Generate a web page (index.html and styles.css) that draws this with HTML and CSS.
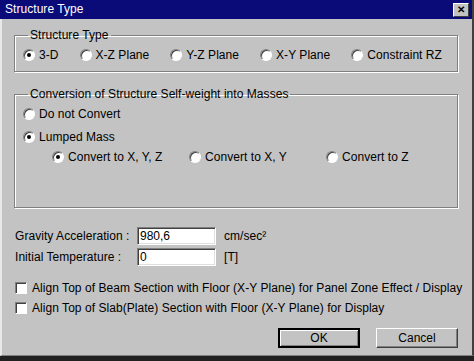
FILE: index.html
```html
<!DOCTYPE html>
<html>
<head>
  <title>Structure Type</title>
  <link rel="stylesheet" href="styles.css">
</head>
<body>
  <div class="dialog">
    <div class="titlebar">
      <span class="title">Structure Type</span>
      <span class="close">&#x2715;</span>
    </div>

    <div class="content">
      <fieldset class="group group-type">
        <legend>Structure Type</legend>
        <div class="radio-row">
          <label class="option"><span class="radio checked"></span>3-D</label>
          <label class="option"><span class="radio"></span>X-Z Plane</label>
          <label class="option"><span class="radio"></span>Y-Z Plane</label>
          <label class="option"><span class="radio"></span>X-Y Plane</label>
          <label class="option"><span class="radio"></span>Constraint RZ</label>
        </div>
      </fieldset>

      <fieldset class="group group-mass">
        <legend>Conversion of Structure Self-weight into Masses</legend>
        <label class="option line"><span class="radio"></span>Do not Convert</label>
        <label class="option line lumped"><span class="radio checked"></span>Lumped Mass</label>
        <div class="sub-row">
          <label class="option"><span class="radio checked"></span>Convert to X, Y, Z</label>
          <label class="option"><span class="radio"></span>Convert to X, Y</label>
          <label class="option"><span class="radio"></span>Convert to Z</label>
        </div>
      </fieldset>

      <div class="fields">
        <span class="field-label">Gravity Acceleration :</span>
        <input class="field" type="text" value="980,6">
        <span class="unit">cm/sec&sup2;</span>
        <span class="field-label">Initial Temperature :</span>
        <input class="field" type="text" value="0">
        <span class="unit">[T]</span>
      </div>

      <div class="checks">
        <label class="option"><span class="checkbox"></span>Align Top of Beam Section with Floor (X-Y Plane) for Panel Zone Effect / Display</label>
        <label class="option"><span class="checkbox"></span>Align Top of Slab(Plate) Section with Floor (X-Y Plane) for Display</label>
      </div>

      <div class="buttons">
        <button class="btn default">OK</button>
        <button class="btn">Cancel</button>
      </div>
    </div>
  </div>
</body>
</html>
```

FILE: styles.css
```css
body {
  margin: 0;
  background: #202020;
  font-family: "Liberation Sans", Arial, sans-serif;
  font-size: 12px;
  letter-spacing: 0.05px;
  color: #000;
}

.dialog {
  width: 474px;
  height: 356px;
  box-sizing: border-box;
  background: #c3c3c3;
  border-left: 2px solid #e8e8e8;
  border-right: 2px solid #404040;
  border-bottom: 1px solid #808080;
  display: flex;
  flex-direction: column;
}

.titlebar {
  height: 19px;
  margin-left: -2px;
  background: #0a0a78;
  color: #fff;
  display: flex;
  align-items: center;
  justify-content: space-between;
  padding: 0 3px 0 5px;
}

.title {
  font-size: 12px;
  line-height: 19px;
}

.close {
  width: 14px;
  height: 12px;
  background: #c3c3c3;
  color: #000;
  font-size: 10px;
  font-weight: bold;
  line-height: 12px;
  text-align: center;
  border: 1px solid;
  border-color: #fff #404040 #404040 #fff;
}

.content {
  padding: 9px 14px 0 12px;
  display: flex;
  flex-direction: column;
}

.group {
  margin: 0;
  padding: 0 8px;
  border: 1px solid #808080;
  box-shadow: 1px 1px 0 #fff, inset 1px 1px 0 #fff;
  min-width: 0;
}

.group legend {
  padding: 0 2px;
  margin-left: 5px;
  line-height: 14px;
}

.group-type {
  height: 44px;
  box-sizing: border-box;
}

.group-mass {
  margin-top: 15px;
  height: 121px;
  box-sizing: border-box;
}

.option {
  display: flex;
  align-items: center;
  line-height: 14px;
  white-space: nowrap;
}

.radio-row {
  display: flex;
  gap: 21px;
  margin-top: 6px;
}

.radio {
  width: 12px;
  height: 12px;
  box-sizing: border-box;
  border-radius: 50%;
  background: #fff;
  border: 1px solid;
  border-color: #808080 #fff #fff #808080;
  box-shadow: inset 1px 1px 0 #404040;
  margin-right: 4px;
  display: inline-flex;
  align-items: center;
  justify-content: center;
  flex: none;
}

.radio.checked::after {
  content: "";
  width: 4px;
  height: 4px;
  border-radius: 50%;
  background: #000;
}

.line {
  margin-top: 6px;
}

.lumped {
  margin-top: 9px;
}

.sub-row {
  display: grid;
  grid-template-columns: 137px 137px 137px;
  margin: 6px 0 0 29px;
}

.fields {
  display: grid;
  grid-template-columns: 114px 79px auto;
  column-gap: 8px;
  row-gap: 3px;
  align-items: center;
  margin-top: 19px;
  padding-left: 1px;
  white-space: nowrap;
}

.field {
  height: 18px;
  box-sizing: border-box;
  margin: 0;
  padding: 0 2px;
  font-family: "Liberation Sans", Arial, sans-serif;
  font-size: 12px;
  background: #fff;
  border: 1px solid;
  border-color: #808080 #fff #fff #808080;
  box-shadow: inset 1px 1px 0 #404040, inset -1px -1px 0 #dfdfdf;
  outline: none;
}

.checks {
  display: flex;
  flex-direction: column;
  gap: 6px;
  margin-top: 15px;
  padding-left: 1px;
}

.checkbox {
  width: 12px;
  height: 12px;
  box-sizing: border-box;
  background: #fff;
  border: 1px solid;
  border-color: #808080 #fff #fff #808080;
  box-shadow: inset 1px 1px 0 #404040;
  margin-right: 5px;
  flex: none;
}

.buttons {
  display: flex;
  justify-content: flex-end;
  gap: 16px;
  margin-top: 13px;
}

.btn {
  width: 82px;
  height: 20px;
  padding: 0;
  font-family: "Liberation Sans", Arial, sans-serif;
  font-size: 12px;
  color: #000;
  background: #c3c3c3;
  border: 1px solid;
  border-color: #fff #404040 #404040 #fff;
  box-shadow: inset -1px -1px 0 #808080;
}

.btn.default {
  border: 2px solid #000;
  box-shadow: inset 1px 1px 0 #fff, inset -1px -1px 0 #808080;
}
```
